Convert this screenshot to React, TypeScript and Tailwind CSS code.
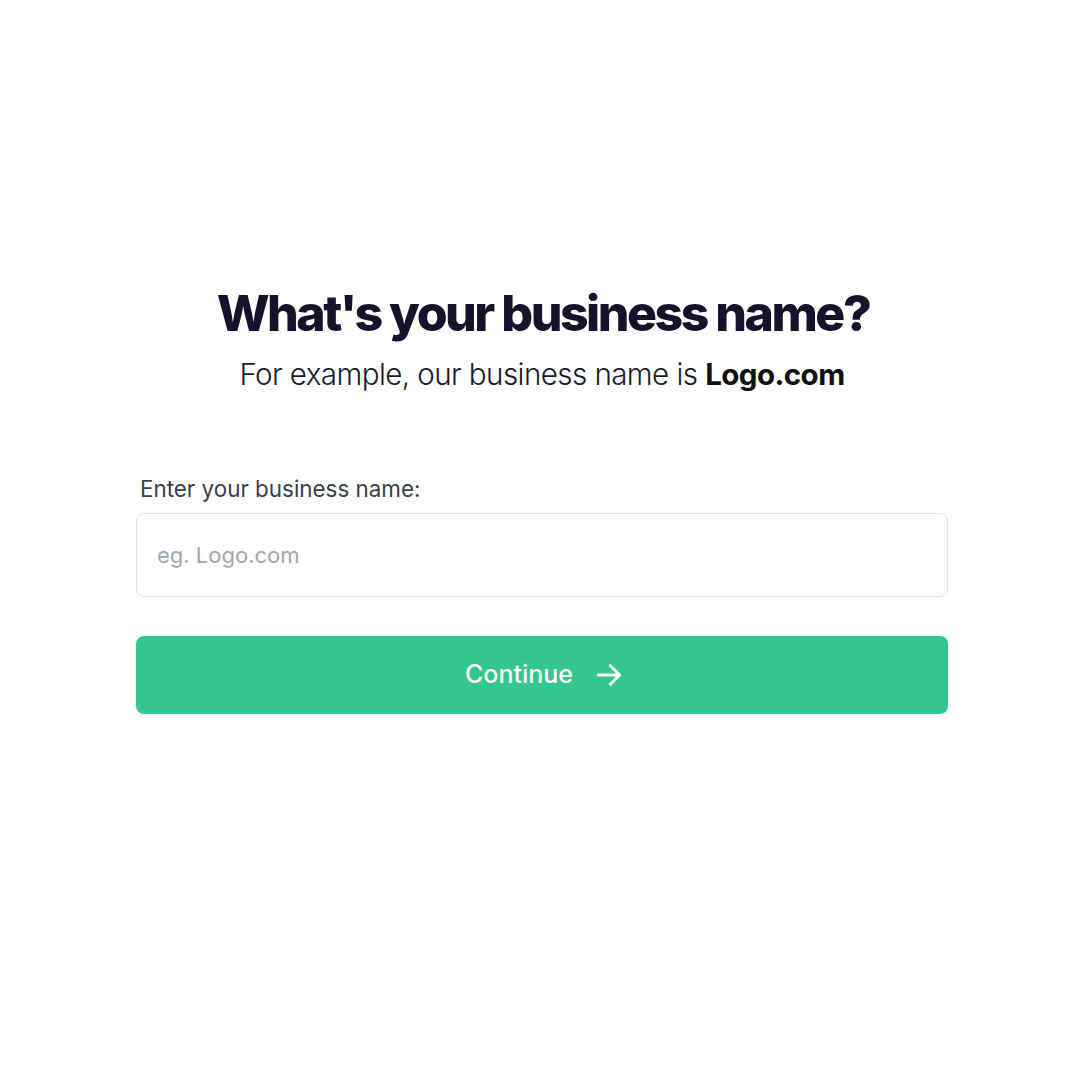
import React from "react";

export default function App() {
  return (
    <div className="w-[1080px] h-[1080px] bg-white flex flex-col items-center pt-[282px]" style={{ fontFamily: "Inter, 'Noto Sans', sans-serif" }}>
      <h1 className="ml-[6px] text-[50px] leading-[62px] font-extrabold tracking-[-0.05em] text-[#14132b]">What's your business name?</h1>
      <p className="ml-[4px] mt-[10px] text-[29.6px] leading-[40px] font-light tracking-[-0.02em] text-[#1a1a2a]">
        For example, our business name is <span className="font-bold text-[#111]">Logo.com</span>
      </p>
      <div className="w-[812px] ml-[4px] mt-[80px] flex flex-col">
        <label className="ml-[4px] text-[22.4px] leading-[30px] font-normal text-[#3b3f4a]">Enter your business name:</label>
        <input
          className="mt-[9px] h-[84px] w-full rounded-[8px] border border-[#e3e4e8] px-[20px] text-[22px] text-[#222] placeholder:text-[#a3a6ad] outline-none"
          placeholder="eg. Logo.com"
        />
        <button className="mt-[39px] h-[78px] w-full rounded-[8px] bg-[#33c68f] flex items-center justify-center gap-[20px] pl-[6px] text-white text-[25px] font-medium">
          <span>Continue</span>
          <svg width="32" height="32" viewBox="0 0 24 24" fill="none" stroke="white" strokeWidth="2.2" strokeLinecap="round" strokeLinejoin="round">
            <path d="M4 12h16M13 5l7 7-7 7" />
          </svg>
        </button>
      </div>
    </div>
  );
}
